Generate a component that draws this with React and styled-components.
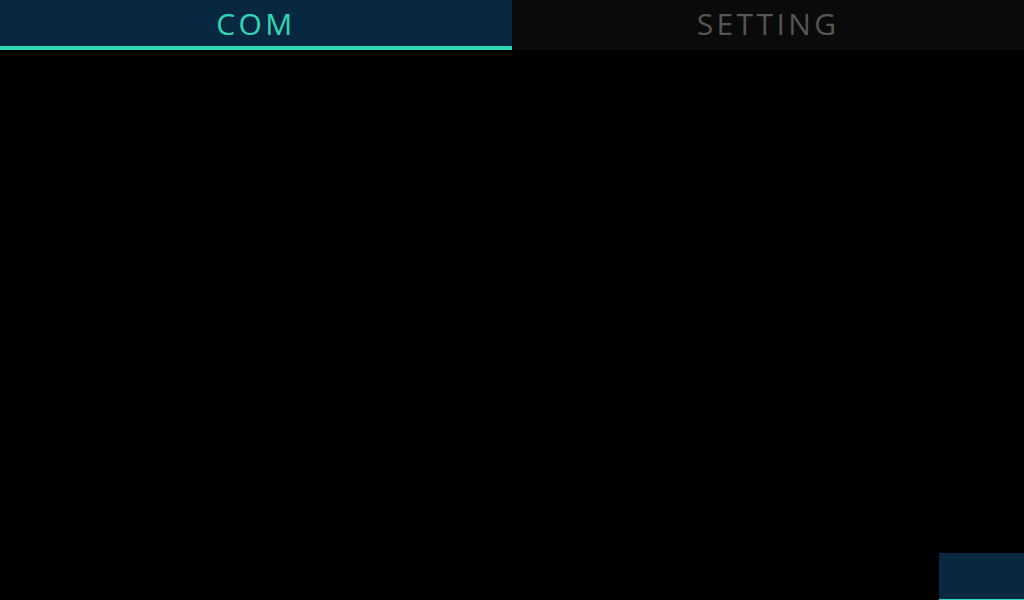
import React, { useState } from "react";
import styled, { createGlobalStyle } from "styled-components";

const GlobalStyle = createGlobalStyle`
  html, body {
    margin: 0;
    padding: 0;
    background: #000;
    font-family: "Open Sans", "Liberation Sans", sans-serif;
  }
`;

const Page = styled.div`
  width: 100%;
  height: 600px;
  display: flex;
  flex-direction: column;
  background: #000;
  overflow: hidden;
`;

const TabBar = styled.div`
  display: grid;
  grid-template-columns: 1fr 1fr;
  height: 50px;
`;

const Tab = styled.button`
  border: none;
  margin: 0;
  padding: 0;
  height: 50px;
  box-sizing: border-box;
  font-family: "Open Sans", "Liberation Sans", sans-serif;
  font-size: 30px;
  font-weight: 500;
  letter-spacing: 3.4px;
  cursor: pointer;
  background: ${(p) => (p.$active ? "#072840" : "#0a0a0a")};
  color: ${(p) => (p.$active ? "#2ed8b6" : "#555")};
  border-bottom: 4px solid ${(p) => (p.$active ? "#2ed8b6" : "transparent")};
`;

const Content = styled.div`
  flex: 1;
`;

const CornerButton = styled.button`
  position: fixed;
  right: 0;
  bottom: 0;
  width: 85px;
  height: 47px;
  border: none;
  padding: 0;
  background: #072840;
  border-bottom: 1px solid #2ed8b6;
`;

export default function App() {
  const [tab, setTab] = useState("com");
  return (
    <>
      <GlobalStyle />
      <Page>
        <TabBar>
          <Tab $active={tab === "com"} onClick={() => setTab("com")}>
            COM
          </Tab>
          <Tab $active={tab === "setting"} onClick={() => setTab("setting")}>
            SETTING
          </Tab>
        </TabBar>
        <Content />
        <CornerButton />
      </Page>
    </>
  );
}
